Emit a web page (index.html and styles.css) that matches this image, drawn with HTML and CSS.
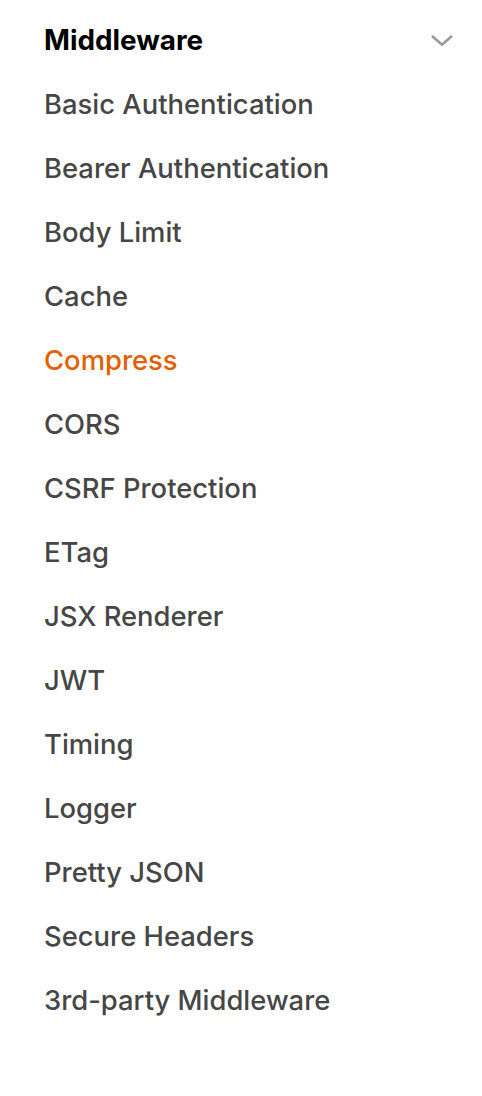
FILE: index.html
```html
<!DOCTYPE html>
<html lang="en">
<head>
  <meta charset="UTF-8" />
  <meta name="viewport" content="width=device-width, initial-scale=1.0" />
  <title>Middleware</title>
  <link rel="stylesheet" href="styles.css">
</head>
<body>
  <nav class="sidebar">
    <section class="group">
      <div class="group-head">
        <h2 class="group-title">Middleware</h2>
        <span class="caret">
          <svg viewBox="0 0 24 24" width="28" height="28" fill="none" stroke="currentColor" stroke-width="2.2" stroke-linecap="round" stroke-linejoin="round">
            <path d="M4 9l8 7 8-7" />
          </svg>
        </span>
      </div>

      <ul class="items">
        <li><a href="#">Basic Authentication</a></li>
        <li><a href="#">Bearer Authentication</a></li>
        <li><a href="#">Body Limit</a></li>
        <li><a href="#">Cache</a></li>
        <li><a href="#" class="active">Compress</a></li>
        <li><a href="#">CORS</a></li>
        <li><a href="#">CSRF Protection</a></li>
        <li><a href="#">ETag</a></li>
        <li><a href="#">JSX Renderer</a></li>
        <li><a href="#">JWT</a></li>
        <li><a href="#">Timing</a></li>
        <li><a href="#">Logger</a></li>
        <li><a href="#">Pretty JSON</a></li>
        <li><a href="#">Secure Headers</a></li>
        <li><a href="#">3rd-party Middleware</a></li>
      </ul>
    </section>
  </nav>
</body>
</html>
```

FILE: styles.css
```css
/* sidebar (2x scale) */
body {
  margin: 0;
  padding: 0;
  font-family: Inter, "Noto Sans", sans-serif;
  background-color: #fff;
  color: #3c3c43;
}

.sidebar {
  padding: 8px 29px 0 44px;
}

.group-head {
  display: flex;
  align-items: center;
  justify-content: space-between;
  padding: 8px 0;
}
.group-title {
  margin: 0;
  font-size: 27.8px;
  line-height: 48px;
  font-weight: 700;
  color: #000;
}
.caret {
  display: flex;
  color: #9a9a9a;
  margin-right: -3px;
}

.items {
  list-style: none;
  margin: 0;
  padding: 0;
}
.items li a {
  display: block;
  padding: 8px 0;
  font-size: 27.4px;
  line-height: 48px;
  font-weight: 500;
  color: #464646;
  text-decoration: none;
}
.items li a.active {
  color: #e36002;
}
```
